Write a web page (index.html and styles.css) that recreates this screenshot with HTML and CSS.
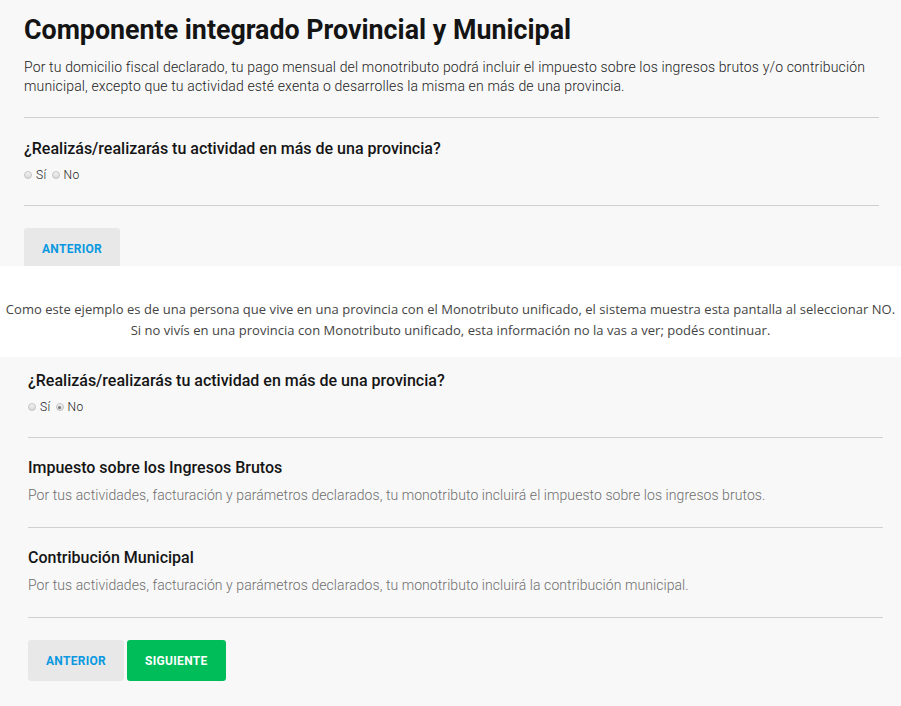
FILE: index.html
```html
<!DOCTYPE html>
<html>
<head>
    <title>Componente integrado Provincial y Municipal</title>
    <link rel="stylesheet" href="styles.css">
</head>
<body>
    <section class="screen screen-top">
        <h1 class="title">Componente integrado Provincial y Municipal</h1>
        <p class="intro">Por tu domicilio fiscal declarado, tu pago mensual del monotributo podrá incluir el impuesto sobre los ingresos brutos y/o contribución municipal, excepto que tu actividad esté exenta o desarrolles la misma en más de una provincia.</p>
        <hr class="divider">
        <h2 class="question">¿Realizás/realizarás tu actividad en más de una provincia?</h2>
        <div class="radios">
            <label class="radio"><span class="dot"></span>Sí</label>
            <label class="radio"><span class="dot"></span>No</label>
        </div>
        <hr class="divider">
        <div class="actions">
            <a href="#" class="btn btn-back">ANTERIOR</a>
        </div>
    </section>

    <div class="note">
        <p>Como este ejemplo es de una persona que vive en una provincia con el Monotributo unificado, el sistema muestra esta pantalla al seleccionar NO.</p>
        <p>Si no vivís en una provincia con Monotributo unificado, esta información no la vas a ver; podés continuar.</p>
    </div>

    <section class="screen screen-bottom">
        <h2 class="question">¿Realizás/realizarás tu actividad en más de una provincia?</h2>
        <div class="radios">
            <label class="radio"><span class="dot"></span>Sí</label>
            <label class="radio"><span class="dot checked"></span>No</label>
        </div>
        <hr class="divider">
        <h3 class="item-title">Impuesto sobre los Ingresos Brutos</h3>
        <p class="item-text">Por tus actividades, facturación y parámetros declarados, tu monotributo incluirá el impuesto sobre los ingresos brutos.</p>
        <hr class="divider divider-item">
        <h3 class="item-title">Contribución Municipal</h3>
        <p class="item-text">Por tus actividades, facturación y parámetros declarados, tu monotributo incluirá la contribución municipal.</p>
        <hr class="divider divider-item">
        <div class="actions">
            <a href="#" class="btn btn-back">ANTERIOR</a>
            <a href="#" class="btn btn-next">SIGUIENTE</a>
        </div>
    </section>
</body>
</html>
```

FILE: styles.css
```css
body {
    margin: 0;
    padding: 0;
    background: #fff;
    font-family: Roboto, "Liberation Sans", sans-serif;
    color: #111;
}
.screen {
    background: #f8f8f8;
    overflow: hidden;
}
.screen-top {
    height: 266px;
    padding: 0 22px 0 24px;
    box-sizing: border-box;
}
.screen-bottom {
    height: 349px;
    padding: 14px 18px 0 28px;
    box-sizing: border-box;
}
.title {
    font-size: 26.8px;
    line-height: 30px;
    font-weight: 700;
    margin: 15px 0 0;
    color: #141414;
}
.intro {
    font-size: 14px;
    line-height: 19px;
    font-weight: 300;
    letter-spacing: 0.15px;
    color: #222;
    margin: 13px 0 0;
}
.divider {
    border: 0;
    border-top: 1px solid #d0d0d0;
    margin: 21px 0 0;
}
.question {
    font-size: 16px;
    line-height: 20px;
    font-weight: 500;
    margin: 21px 0 0;
    color: #151515;
}
.screen-bottom .question {
    margin-top: 0;
}
.radios {
    display: flex;
    align-items: center;
    gap: 5px;
    margin-top: 8px;
    font-size: 12px;
    line-height: 16px;
    font-weight: 300;
    color: #222;
    letter-spacing: 0.4px;
}
.radio {
    display: flex;
    align-items: center;
}
.dot {
    width: 6px;
    height: 6px;
    border: 1px solid #c4c4c4;
    border-radius: 50%;
    background: linear-gradient(#f4f4f4, #d8d8d8);
    margin-right: 4px;
    position: relative;
}
.dot.checked::after {
    content: "";
    position: absolute;
    left: 1.5px;
    top: 1.5px;
    width: 3px;
    height: 3px;
    border-radius: 50%;
    background: #777;
}
.radios + .divider {
    margin-top: 22px;
}
.item-title {
    font-size: 16px;
    line-height: 20px;
    font-weight: 500;
    margin: 20px 0 0;
    color: #151515;
}
.item-text {
    font-size: 14px;
    line-height: 18px;
    font-weight: 300;
    letter-spacing: 0.07px;
    color: #6e6e6e;
    margin: 8px 0 0;
}
.divider-item {
    margin-top: 23px;
}
.actions {
    display: flex;
    gap: 3px;
    margin-top: 22px;
}
.btn {
    display: inline-flex;
    align-items: center;
    justify-content: center;
    height: 41px;
    padding: 0 18px;
    border-radius: 3px;
    font-size: 12px;
    font-weight: 700;
    letter-spacing: 0.3px;
    text-decoration: none;
}
.btn-back {
    background: #e8e8e8;
    color: #0a99e0;
}
.btn-next {
    background: #00bd5a;
    color: #fff;
}
.note {
    padding: 33px 0 16px;
    text-align: center;
    font-family: "Open Sans", sans-serif;
    font-size: 13px;
    line-height: 21px;
    letter-spacing: 0.04px;
    color: #444;
}
.note p {
    margin: 0;
}
```
